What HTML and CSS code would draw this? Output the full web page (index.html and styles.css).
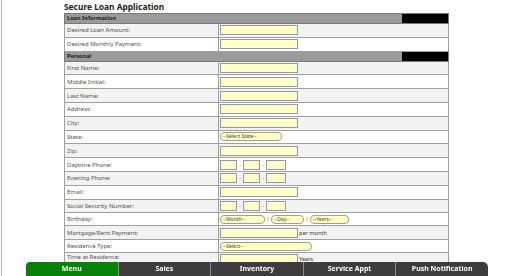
FILE: index.html
```html
<!DOCTYPE html>
<html lang="en">
<head>
    <meta charset="UTF-8">
    <title>Secure Loan Application</title>
    <link rel="stylesheet" href="styles.css">
</head>
<body>
<div class="page">
    <h1 class="title">Secure Loan Application</h1>
    <table class="form">
        <tbody>
            <tr class="section"><td colspan="2"><div class="section-bar"><span class="section-name">Loan Information</span><span class="section-end"></span></div></td></tr>
            <tr><td class="lbl">Desired Loan Amount:</td><td class="fld"><input class="txt" type="text"></td></tr>
            <tr><td class="lbl">Desired Monthly Payment:</td><td class="fld"><input class="txt" type="text"></td></tr>
        </tbody>
        <tbody>
            <tr class="section"><td colspan="2"><div class="section-bar"><span class="section-name">Personal</span><span class="section-end"></span></div></td></tr>
            <tr><td class="lbl">First Name:</td><td class="fld"><input class="txt" type="text"></td></tr>
            <tr><td class="lbl">Middle Initial:</td><td class="fld"><input class="txt" type="text"></td></tr>
            <tr><td class="lbl">Last Name:</td><td class="fld"><input class="txt" type="text"></td></tr>
            <tr><td class="lbl">Address:</td><td class="fld"><input class="txt" type="text"></td></tr>
            <tr><td class="lbl">City:</td><td class="fld"><input class="txt" type="text"></td></tr>
            <tr><td class="lbl">State:</td><td class="fld"><select class="sel sel-state"><option>--Select State--</option></select></td></tr>
            <tr><td class="lbl">Zip:</td><td class="fld"><input class="txt" type="text"></td></tr>
            <tr><td class="lbl">Daytime Phone:</td><td class="fld"><div class="group"><input class="txt ph" type="text"><span class="sep">-</span><input class="txt ph" type="text"><span class="sep">-</span><input class="txt ph4" type="text"></div></td></tr>
            <tr><td class="lbl">Evening Phone:</td><td class="fld"><div class="group"><input class="txt ph" type="text"><span class="sep">-</span><input class="txt ph" type="text"><span class="sep">-</span><input class="txt ph4" type="text"></div></td></tr>
            <tr><td class="lbl">Email:</td><td class="fld"><input class="txt" type="text"></td></tr>
            <tr><td class="lbl">Social Security Number:</td><td class="fld"><div class="group"><input class="txt ph" type="text"><span class="sep">-</span><input class="txt ph" type="text"><span class="sep">-</span><input class="txt ph4" type="text"></div></td></tr>
            <tr class="short"><td class="lbl">Birthday:</td><td class="fld"><div class="group"><select class="sel sel-month"><option>--Month--</option></select><span class="sep">/</span><select class="sel sel-day"><option>--Day--</option></select><span class="sep">/</span><select class="sel sel-year"><option>--Years--</option></select></div></td></tr>
            <tr><td class="lbl">Mortgage/Rent Payment:</td><td class="fld"><div class="group"><input class="txt" type="text"><span class="unit">per month</span></div></td></tr>
            <tr class="short"><td class="lbl">Residence Type:</td><td class="fld"><select class="sel sel-res"><option>--Select--</option></select></td></tr>
            <tr class="peek"><td class="lbl">Time at Residence:</td><td class="fld"><div class="group"><input class="txt" type="text"><span class="unit">Years</span></div></td></tr>
        </tbody>
    </table>
</div>

<nav class="tabs">
    <a class="tab active">Menu</a>
    <a class="tab">Sales</a>
    <a class="tab">Inventory</a>
    <a class="tab">Service Appt</a>
    <a class="tab">Push Notification</a>
</nav>
</body>
</html>
```

FILE: styles.css
```css
html, body {
    margin: 0;
    padding: 0;
    background-color: #fff;
    overflow: hidden;
}
body {
    font-family: "Noto Sans", "Open Sans", sans-serif;
    color: #333;
}
.page {
    margin-left: 1px;
    border-left: 1px solid #b4b4b4;
    height: 276px;
    padding-left: 62px;
}
.title {
    margin: 0;
    padding-top: 2px;
    height: 11px;
    font-size: 8.4px;
    line-height: 10px;
    font-weight: bold;
    color: #222;
}
.form {
    width: 385px;
    border-collapse: collapse;
    border: 1px solid #8c8c8c;
    font-size: 6px;
}
.form td {
    border: 1px solid #a0a0a0;
    padding: 0;
}
.form tr {
    height: 13.8px;
}
.form tr.short {
    height: 13px;
}
.form tbody tr:nth-child(even) {
    background-color: #f3f3f3;
}
.form tr.section {
    height: 10px;
}
.section td {
    border-color: #7a7a7a;
}
.section-bar {
    display: flex;
    height: 9px;
}
.section-name {
    flex: 1;
    background-color: #9b9b9b;
    color: #1c1c1c;
    font-weight: bold;
    font-size: 5.6px;
    line-height: 9px;
    padding-left: 2px;
}
.section-end {
    width: 46px;
    background-color: #000;
}
.lbl {
    width: 151px;
    padding-left: 2px !important;
    color: #505050;
    line-height: 12px;
}
.peek .lbl {
    vertical-align: top;
    line-height: 9px;
}
.peek .fld {
    vertical-align: top;
    padding-top: 1px !important;
}
.fld {
    padding-left: 1px !important;
}
.group {
    display: flex;
    align-items: center;
}
.txt {
    display: block;
    box-sizing: border-box;
    width: 78px;
    height: 10px;
    margin: 0;
    padding: 0;
    border: 1px solid #9595ab;
    background-color: #ffffc8;
}
.txt.ph {
    width: 17px;
}
.txt.ph4 {
    width: 20px;
}
.sep {
    width: 6px;
    text-align: center;
    font-size: 5px;
    color: #555;
}
.unit {
    font-size: 5.6px;
    color: #333;
    padding-left: 1px;
}
.sel {
    -webkit-appearance: none;
    appearance: none;
    box-sizing: border-box;
    display: block;
    height: 9px;
    margin: 0;
    padding: 0 2px;
    border: 1px solid #a79f7e;
    border-radius: 4px;
    background-color: #ffffc8;
    font-family: "Noto Sans", sans-serif;
    font-size: 5px;
    line-height: 7px;
    color: #444;
}
.sel-state { width: 62px; }
.sel-month { width: 45px; }
.sel-day { width: 33px; }
.sel-year { width: 39px; }
.sel-res { width: 92px; }
.tabs {
    position: fixed;
    left: 26px;
    bottom: 0;
    width: 462px;
    height: 14px;
    display: flex;
}
.tab {
    flex: 1;
    background-color: #3d3d3d;
    color: #fff;
    font-weight: bold;
    font-size: 7px;
    line-height: 14px;
    text-align: center;
    border-left: 1px solid #8a8a8a;
}
.tab:first-child {
    border-left: none;
    border-top-left-radius: 4px;
}
.tab:last-child {
    border-top-right-radius: 5px;
}
.tab.active {
    background-color: #078107;
}
```
